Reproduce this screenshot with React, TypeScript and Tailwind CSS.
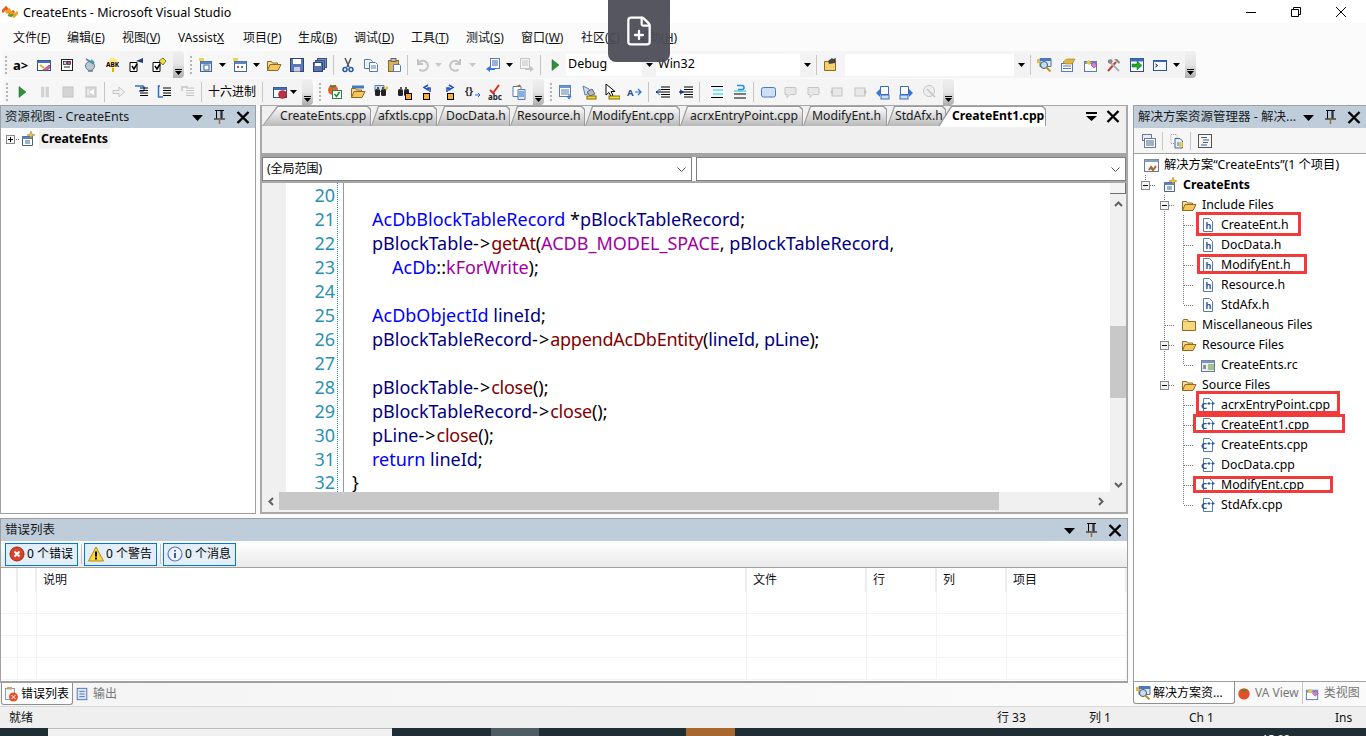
import type { ReactNode } from "react"
import { FilePlus } from "lucide-react"

const S = ({ children, s = 16 }: { children: ReactNode; s?: number }) => (
  <svg width={s} height={s} viewBox="0 0 16 16" className="block shrink-0">
    {children}
  </svg>
)

const winBase = (
  <>
    <rect x="1.5" y="3.5" width="13" height="10" fill="#fff" stroke="#34506f" />
    <rect x="1.5" y="3.5" width="13" height="2.5" fill="#3f6fc0" />
  </>
)
const docBase = <path d="M3.5 1.5h6l3 3v10h-9z" fill="#fff" stroke="#5a7ca8" />
const folderOpen = (
  <>
    <path d="M1.5 13.5v-9h4l1 1.500h5v2" fill="#f7df9a" stroke="#8a6a24" />
    <path d="M1.500 13.500l2.500-6h11l-3 6z" fill="#f6c55b" stroke="#8a6a24" />
  </>
)
const bino = (
  <>
    <rect x="2" y="5" width="5" height="7" rx="1.500" fill="#222" />
    <rect x="8" y="5" width="5" height="7" rx="1.500" fill="#222" />
    <rect x="4" y="3" width="2" height="3" fill="#555" />
    <rect x="9" y="3" width="2" height="3" fill="#555" />
  </>
)
const lines = (c = "#000") => (
  <path d="M6 4h8M6 6.500h8M6 9h8M6 11.500h8" stroke={c} strokeWidth="1" />
)
const gray = "#c4c4c4"
const bubble = (
  <path d="M2 3.500h10a1 1 0 0 1 1 1v5a1 1 0 0 1-1 1H7l-3 3v-3H2z" fill="#e6e6e6" stroke={gray} />
)

const ICONS: Record<string, ReactNode> = {
  ax: <text x="0" y="13" fontSize="13" fontWeight="700" fill="#000">a&gt;</text>,
  edit: <>{winBase}<path d="M7 13l6-5 2 2-5 4z" fill="#e05ab0" stroke="#333" strokeWidth=".5" /><path d="M4 8l4 3" stroke="#e0b020" strokeWidth="2" /></>,
  win2: <><rect x="2.500" y="2.500" width="11" height="11" fill="#fff" stroke="#222" /><rect x="4.500" y="4.500" width="3" height="3" fill="#d0d0d0" stroke="#222" strokeWidth=".7" /><rect x="8.500" y="4.500" width="3" height="3" fill="#e040a0" stroke="#222" strokeWidth=".7" /><path d="M5 10h6" stroke="#222" /></>,
  globe: <><circle cx="8" cy="9" r="4.500" fill="#b9c8d2" stroke="#66808f" /><path d="M4 2l8 5M6 14h5" stroke="#66808f" strokeWidth="1.500" /><path d="M9 3l3 3" stroke="#3aa0c0" strokeWidth="2" /></>,
  abk: <><circle cx="8" cy="6" r="5" fill="#ffe680" /><text x="1" y="10" fontSize="6.500" fontWeight="700" fill="#000">ABK</text><path d="M8 11v4" stroke="#e0b000" strokeWidth="2" /></>,
  tag1: <><path d="M2 5.500h7v9H2z" fill="#fff" stroke="#000" /><path d="M4 9l2 3 3-5" stroke="#000" fill="none" strokeWidth="1.500" /><path d="M8 4l7-3v5z" fill="#223c80" /></>,
  tag2: <><path d="M2 5.500h7v9H2z" fill="#fff" stroke="#000" /><path d="M4 9l2 3 3-5" stroke="#000" fill="none" strokeWidth="1.500" /><path d="M8 4l4-3 3 3-3 4z" fill="#f2e030" stroke="#000" strokeWidth=".5" /></>,
  newp: <><rect x="2.500" y="4.500" width="11" height="10" fill="#d9e5f4" stroke="#45648c" /><rect x="2.500" y="4.500" width="11" height="2.500" fill="#5c86c0" /><rect x="6" y="8" width="5" height="5" fill="#fff" stroke="#45648c" /><path d="M1 1h5v3H1z" fill="#f2d25a" /></>,
  addp: <><rect x="2.500" y="4.500" width="12" height="10" fill="#fff" stroke="#45648c" /><rect x="2.500" y="4.500" width="12" height="2.500" fill="#5c86c0" /><rect x="5" y="9" width="2" height="2" fill="#e04040" /><rect x="9" y="9" width="2" height="2" fill="#40a040" /><path d="M1 1h5v3H1z" fill="#f2d25a" /></>,
  open: folderOpen,
  save: <><rect x="1.500" y="1.500" width="13" height="13" fill="#5a78b8" stroke="#2c4478" /><rect x="4" y="2" width="8" height="5" fill="#fff" /><rect x="5" y="10" width="6" height="4.500" fill="#c8d0dc" /></>,
  saveall: <><rect x="5.500" y="1.500" width="9" height="9" fill="#7a90c4" stroke="#3b4f84" /><rect x="3.500" y="3.500" width="9" height="9" fill="#6a82bc" stroke="#3b4f84" /><rect x="1.500" y="5.500" width="9" height="9" fill="#5a74b0" stroke="#2c4478" /><rect x="3" y="6" width="6" height="3" fill="#fff" /></>,
  cut: <><path d="M5 1l4 9M11 1L7 10" stroke="#555" strokeWidth="1.500" /><circle cx="5" cy="12.500" r="2" fill="none" stroke="#2458b0" strokeWidth="1.500" /><circle cx="11" cy="12.500" r="2" fill="none" stroke="#2458b0" strokeWidth="1.500" /></>,
  copy: <><path d="M1.500 2.500h6l2 2v7h-8z" fill="#eaf1fa" stroke="#5a7ca8" /><path d="M6.500 5.500h6l2 2v7h-8z" fill="#fff" stroke="#5a7ca8" /><path d="M8 9h5M8 11h5" stroke="#5a7ca8" /></>,
  paste: <><rect x="2.500" y="3.500" width="10" height="11" fill="#d8b35a" stroke="#86682a" /><rect x="5" y="1.500" width="5" height="3" fill="#c0c0c0" stroke="#666" /><path d="M7.500 7.500h6l1 1v6h-7z" fill="#fff" stroke="#5a7ca8" /></>,
  undo: <path d="M4 2v5h5M4.500 6.500a5 5 0 1 1 1 6" fill="none" stroke={gray} strokeWidth="2" />,
  redo: <path d="M12 2v5H7M11.500 6.500a5 5 0 1 0-1 6" fill="none" stroke={gray} strokeWidth="2" />,
  nav: <><rect x="5.500" y="1.500" width="9" height="10" fill="#fff" stroke="#5a7ca8" /><path d="M7 4h6M7 6h6M7 8h6" stroke="#3a5fc0" /><path d="M1 12l4-3v2h5v2H5v2z" fill="#3a78d8" /></>,
  navg: <><rect x="1.500" y="1.500" width="9" height="10" fill="#f4f4f4" stroke={gray} /><path d="M3 4h6M3 6h6M3 8h6" stroke={gray} /><path d="M15 12l-4-3v2H6v2h5v2z" fill={gray} /></>,
  play: <path d="M5 2.500l7 5.500-7 5.500z" fill="#2f8f3f" stroke="#1f6f2f" strokeWidth=".5" />,
  pause: <path d="M4.500 3h2.500v10H4.500zM9 3h2.500v10H9z" fill="#d4d4d4" stroke={gray} strokeWidth=".5" />,
  stop: <rect x="3" y="3" width="10" height="10" fill="#d4d4d4" stroke={gray} />,
  back: <><rect x="3" y="3" width="10" height="10" fill="#d8d8d8" stroke={gray} /><path d="M11 5v6L6 8z" fill="#fff" /><path d="M5 5v6" stroke="#fff" /></>,
  step: <path d="M2 6.500h6V3l5.500 5L8 13V9.500H2z" fill="#f0f0f0" stroke={gray} />,
  stepin: <><path d="M1 2h8a3 3 0 0 1 0 5H5" fill="none" stroke="#2f6fd0" strokeWidth="1.500" />{lines()}</>,
  stepov: <><path d="M3 2H1.500v11H6" fill="none" stroke="#2f6fd0" strokeWidth="1.500" />{lines()}</>,
  stepout: <><path d="M2 7V3h6" fill="none" stroke={gray} strokeWidth="1.500" />{lines(gray)}</>,
  breakp: <>{winBase}<circle cx="10.500" cy="10.500" r="4" fill="#c03040" stroke="#80202a" strokeWidth=".5" /></>,
  tomato: <><circle cx="6" cy="6" r="5" fill="#e06030" /><path d="M3 1.500l3 1.500 3-1.500" stroke="#3a8a30" strokeWidth="1.500" fill="none" /><rect x="5.500" y="6.500" width="9" height="8" fill="#fff" stroke="#2f7f3f" /><path d="M7.500 10l2 2.500 3-4.500" stroke="#1a8a3a" strokeWidth="1.500" fill="none" /></>,
  openfile: <><rect x="2" y="1.500" width="12" height="3" fill="#4a78c0" />{folderOpen}</>,
  findp: <><path d="M2 1.500h9v6H2z" fill="#cfe0f4" stroke="#5a7ca8" /><path d="M9 7l5-5 1.500 2-4 5z" fill="#e8c040" />{bino}</>,
  bino: <>{bino}<rect x="9.500" y="9.500" width="6" height="6" fill="#f5a030" stroke="#000" /></>,
  ret1: <><path d="M9 1l-4 2.500 4 2.500V4h2v4" fill="none" stroke="#1848c8" strokeWidth="1.500" /><rect x="4.500" y="9.500" width="6" height="6" fill="#f8b040" stroke="#000" /></>,
  ret2: <><path d="M7 1l4 2.500-4 2.500V4H5v4" fill="none" stroke="#1848c8" strokeWidth="1.500" /><rect x="5.500" y="9.500" width="6" height="6" fill="#f8b040" stroke="#000" /></>,
  brace: <><text x="0" y="11" fontSize="10" fontWeight="700" fill="#222">{"{}"}</text><path d="M10 11h5M13 9l2 2-2 2" stroke="#2f6fd0" fill="none" /></>,
  abc: <><path d="M2 6l3 3 6-8" stroke="#d83020" strokeWidth="2" fill="none" /><text x="0" y="15.500" fontSize="8" fontWeight="700" fill="#222">abc</text></>,
  rename: <><path d="M2 2.500h8v10H2z" fill="#fff" stroke="#5a7ca8" /><path d="M7 5.500h7v10H7z" fill="#dce8f6" stroke="#5a7ca8" /><path d="M8 8h5M8 10h5M8 12h5" stroke="#2f6fd0" /><path d="M5 2l4-1.500 1 2z" fill="#e05a20" /></>,
  tbl: <><rect x="1.500" y="1.500" width="11" height="11" fill="#fff" stroke="#5a7ca8" /><rect x="1.500" y="1.500" width="11" height="2.500" fill="#6a94cc" /><path d="M3 6h8M3 8h8M3 10h8" stroke="#5a7ca8" /><path d="M11 10v4M9 12l2 3 2-3" stroke="#2f6fd0" fill="none" /></>,
  flag: <><path d="M2 2l6 3 1 4-5 2z" fill="#cfe0f4" stroke="#5a7ca8" /><path d="M6 8l5-3 3 5-5 2z" fill="#b0b8c0" stroke="#667" /><rect x="6" y="12" width="9" height="3" fill="#f0d830" stroke="#806a00" /></>,
  cursor: <><path d="M2 0v11l3-2.500 2 4 2-1-2-4h4z" fill="#fff" stroke="#000" /><rect x="5" y="12" width="11" height="3" fill="#f0e030" stroke="#806a00" /></>,
  ax2: <><text x="0" y="12" fontSize="9.500" fontWeight="700" fill="#2a4f90">A</text><path d="M8 8h6M11 5l3 3-3 3" stroke="#2f6fd0" fill="none" strokeWidth="1.200" /></>,
  outl: <><path d="M1 8l4-3v2h0M1 8l4 3" stroke="#2f6fd0" fill="none" /><path d="M6 3h9M6 5.500h9M1 8h14M6 10.500h9M6 13h9" stroke="#000" /></>,
  indr: <><path d="M6 8L2 5v6z" fill="#2f6fd0" /><path d="M6 3h9M6 5.500h9M1 8h14M6 10.500h9M6 13h9" stroke="#000" /></>,
  cmt: <><path d="M2 2.500h12M2 13.500h12" stroke="#000" strokeWidth="1.200" /><path d="M4 6h10M4 10h10" stroke="#18d0e0" strokeWidth="1.200" /></>,
  cmt2: <><path d="M2 10h12M2 14h12" stroke="#000" strokeWidth="1.200" /><path d="M2 7h12" stroke="#18d0e0" strokeWidth="1.200" /><path d="M5 1.500h5a2 2 0 0 1 0 4H6" fill="none" stroke="#1f8fe0" strokeWidth="1.500" /></>,
  box: <rect x="1.500" y="3.500" width="14" height="9.500" rx="2" fill="#cfe0f6" stroke="#4a78c0" />,
  b1: bubble,
  b2: bubble,
  b3: <><rect x="3" y="4" width="10" height="8" fill="#e8e8e8" stroke={gray} /><path d="M1 8l3-3v6z" fill={gray} /></>,
  b4: <><rect x="3" y="4" width="10" height="8" fill="#e8e8e8" stroke={gray} /><path d="M15 8l-3-3v6z" fill={gray} /></>,
  navl: <><path d="M5.500 2.500h8v8h-8z" fill="#fff" stroke="#3a6ac0" /><path d="M1 9l4-4v8z" fill="#2f78e0" /><rect x="6" y="11" width="8" height="4" fill="#cfe0f6" stroke="#3a6ac0" /></>,
  navr: <><path d="M2.500 2.500h8v8h-8z" fill="#fff" stroke="#3a6ac0" /><path d="M15 9l-4-4v8z" fill="#2f78e0" /><rect x="2" y="11" width="8" height="4" fill="#cfe0f6" stroke="#3a6ac0" /></>,
  b5: <><circle cx="8" cy="7" r="5.500" fill="#eee" stroke={gray} /><path d="M6 5l5 5M11 10l3 3" stroke={gray} strokeWidth="1.500" /></>,
  fold: <><path d="M1.500 13.500v-9h5l1-1h5v10z" fill="#f4d16c" stroke="#8a6a24" /><path d="M5 4l4-3 1 1 3-1-1 5-6 1z" fill="#444" /></>,
  findwin: <><path d="M3 1.500h11v8H3z" fill="#dbe7f6" stroke="#4f74a8" /><rect x="3" y="1.500" width="11" height="2.500" fill="#4a78c0" /><circle cx="7" cy="8" r="3.500" fill="#bfe0f8" stroke="#555" /><path d="M9.500 10.500l4 4" stroke="#c09020" strokeWidth="2" /><path d="M0 2h3v4H0z" fill="#e8b840" /></>,
  props: <><rect x="1.500" y="6.500" width="11" height="8" fill="#fff" stroke="#5a7ca8" /><path d="M3 9h8M3 11.500h8" stroke="#5a7ca8" /><path d="M3 5l4-3h8l-3 5H5z" fill="#e0b840" stroke="#806010" strokeWidth=".5" /></>,
  clsv: <><rect x="1.500" y="4.500" width="12" height="10" fill="#fff" stroke="#5a7ca8" /><path d="M1.500 5h12v2h-12z" fill="#6a94cc" /><path d="M8 8l3-3 3 3-3 3z" fill="#e07ad0" stroke="#803070" strokeWidth=".5" /><path d="M3 6l2-3 3 2-2 3z" fill="#f2c83a" /></>,
  tools: <><path d="M2 14L10 5" stroke="#c04030" strokeWidth="2" /><path d="M8 2l5 5 1-2-3-3z" fill="#888" /><path d="M13 14L5 6" stroke="#b0b0b0" strokeWidth="2" /><path d="M2 3l3-1 2 2-2 3-3-1z" fill="#888" /></>,
  green: <><rect x="1.500" y="1.500" width="13" height="13" fill="#fff" stroke="#2f4f8a" /><rect x="1.500" y="1.500" width="13" height="3" fill="#3a6ac0" /><path d="M3 7h5V4l5 4.500L8 13v-3H3z" fill="#22a82c" stroke="#0f6a18" strokeWidth=".5" /></>,
  term: <><rect x="1.500" y="3.500" width="13" height="10" fill="#f4f8ff" stroke="#2f4f8a" /><rect x="1.500" y="3.500" width="13" height="1.500" fill="#3a6ac0" /><path d="M3.500 7l2 1.500-2 1.500" stroke="#000" fill="none" /></>,
  sln: <><rect x="1.500" y="2.500" width="14" height="12" fill="#f6f8fb" stroke="#6a7a90" /><rect x="1.500" y="2.500" width="14" height="2.500" fill="#8aa0b8" /><path d="M6 13l2-3 2 3 3-4" stroke="#e04a20" strokeWidth="2" fill="none" /><path d="M8 10l2 3" stroke="#3aa030" strokeWidth="2" /></>,
  proj: <><path d="M2.500 5.500h10v9h-10z" fill="#fff" stroke="#45648c" /><rect x="2.500" y="5.500" width="10" height="2.500" fill="#5c86c0" /><path d="M5 10h5M5 12h5" stroke="#45648c" /><path d="M11 0l1 3 3 1-3 1-1 3-1-3-3-1 3-1z" fill="#f2c83a" stroke="#806010" strokeWidth=".4" /></>,
  fclosed: <><path d="M1.500 4.500v9h13v-9z" fill="#f6d779" stroke="#8a6a24" /><path d="M1.500 4.500l1-2h4l1 2" fill="#f9e6a6" stroke="#8a6a24" /></>,
  h: <>{docBase}<text x="5.500" y="12" fontSize="9" fontWeight="700" fill="#1c56a8">h</text></>,
  cpp: <>{docBase}<text x="1" y="11.500" fontSize="9.500" fontWeight="700" fill="#1c56a8">C</text><path d="M7.500 6.500h3M9 5v3M11.500 6.500h3M13 5v3" stroke="#1c56a8" /></>,
  rc: <><rect x="1.500" y="3.500" width="13" height="11" fill="#e8edf4" stroke="#6a7a90" /><rect x="1.500" y="3.500" width="13" height="2.500" fill="#7a96bc" /><rect x="8" y="7" width="6" height="6" fill="#9fc48a" /><path d="M3 9h3M3 11h3" stroke="#333" /></>,
  err: <><circle cx="8" cy="8" r="7" fill="#d9432a" stroke="#a02a18" /><path d="M5.500 5.500l5 5M10.500 5.500l-5 5" stroke="#fff" strokeWidth="2" /></>,
  warn: <><path d="M8 1l7.500 14H.500z" fill="#f9d93c" stroke="#b08a10" /><path d="M8 5.500v5M8 11.500v2" stroke="#000" strokeWidth="2" /></>,
  info: <><circle cx="8" cy="8" r="7" fill="#eef3fb" stroke="#5a7cc0" strokeWidth="1.200" /><path d="M8 4v1.500M8 7v5" stroke="#2f5fb0" strokeWidth="2" /></>,
  errtab: <><rect x="2.500" y="2.500" width="9" height="11" fill="#f4f6fa" stroke="#8a9ab0" /><rect x="4" y="1" width="5" height="2.500" fill="#c8a860" /><circle cx="10.500" cy="11" r="4.500" fill="#e8502c" /><path d="M8.500 9l4 4M12.500 9l-4 4" stroke="#fff" /></>,
  out: <><rect x="2.500" y="1.500" width="11" height="13" fill="#dbe6f6" stroke="#4a6ab0" /><path d="M5 5h6M5 8h6M5 11h6" stroke="#4a6ab0" /></>,
  tomatoTab: <><circle cx="8" cy="9" r="6.500" fill="#e0502a" /><path d="M4 3l4 1.500L12 3l-2 3H6z" fill="#3f8f30" /></>,
  vslogo: <><path d="M0 8l4-4 5 6 3-3" stroke="#e85a20" strokeWidth="3" fill="none" /><path d="M16 8l-4 4-5-6-3 3" stroke="#f0a020" strokeWidth="3" fill="none" /><path d="M6 11l3 1 2-2" stroke="#58a030" strokeWidth="2" fill="none" /></>,
  tb1: <><rect x="1.500" y="1.500" width="9" height="6" fill="#e8edf4" stroke="#6a7a90" /><rect x="3.500" y="5.500" width="11" height="9" fill="#fff" stroke="#6a7a90" /><path d="M5 8h8M5 10h8M5 12h8" stroke="#45648c" /></>,
  tb2: <><path d="M2 1.500h6v9H2z" fill="#fff" stroke="#999" strokeDasharray="1 1" /><path d="M6 5.500h5l2.500 2.500v7H6z" fill="#e8f0fa" stroke="#45648c" /><path d="M8 10h4M8 12h4" stroke="#2f6fd0" /><rect x="10" y="9" width="4" height="5" fill="#f2c83a" opacity=".8" /></>,
  tb3: <><rect x="1.500" y="1.500" width="13" height="13" fill="#fbf6e6" stroke="#555" /><path d="M4 4.500h6M6 7h6M6 9.500h5M4 12h6" stroke="#2f5fc0" /></>,
}

const Ico = ({ n, s }: { n: string; s?: number }) => <S s={s}>{ICONS[n]}</S>

const Tri = ({ c = "#000" }: { c?: string }) => (
  <svg width="7" height="4" viewBox="0 0 7 4" className="block">
    <path d="M0 0h7L3.500 4z" fill={c} />
  </svg>
)

const Chev = ({ w }: { w: string }) => (
  <div className={`${w} h-full shrink-0 rounded-r-[4px] bg-gradient-to-b from-[#f0f0f0] via-[#e4e4e4] to-[#aeaeae] flex flex-col items-center justify-end pb-[3px]`}>
    <div className="w-[7px] h-px bg-black mb-px" />
    <Tri />
  </div>
)

const Combo = ({ w, label }: { w: string; label?: string }) => (
  <div className={`${w} h-[22px] shrink-0 bg-white flex items-center pl-[2px] text-[12.5px] text-black`}>
    <span className="flex-1">{label}</span>
    <div className="w-[14px] h-full bg-[#f2f2f2] flex items-center justify-center">
      <Tri />
    </div>
  </div>
)

function Item({ t }: { t: string }) {
  if (t === "|") return <div className="w-[5px] flex justify-center shrink-0"><div className="w-px h-[20px] bg-[#c6c6c6]" /></div>
  if (t === "v") return <div className="w-[11px] flex justify-center shrink-0"><Tri /></div>
  if (t === "vg") return <div className="w-[11px] flex justify-center shrink-0"><Tri c="#c8c8c8" /></div>
  if (t === ".") return <div className="w-[3px] shrink-0" />
  if (t === "-") return <div className="w-0 -ml-[3px] shrink-0" />
  if (t === "hex") return <div className="w-[56px] shrink-0 text-center text-[12px] text-black">十六进制</div>
  if (t === "debug") return <Combo w="w-[90px]" label="Debug" />
  if (t === "win32") return <Combo w="w-[158px]" label="Win32" />
  if (t === "cfg") return <Combo w="w-[183px]" />
  return <div className="w-[23px] h-full flex items-center justify-center shrink-0"><Ico n={t} /></div>
}

const Strip = ({ items, ml, grip }: { items: string; ml: string; grip: string }) => (
  <div className={`${ml} h-full flex items-center rounded-[3px] bg-gradient-to-r from-[#f7f7f7] to-[#f3f3f3]`}>
    <div className={`${grip} shrink-0 flex justify-center`}>
      <div className="h-[18px] border-l-2 border-dotted border-[#b4b4b4]" />
    </div>
    {items.split(" ").map((t, i) => <Item key={i} t={t} />)}
    <Chev w="w-[11px]" />
  </div>
)

const Pin = () => (
  <svg width="11" height="15" viewBox="0 0 11 15" className="block">
    <path d="M1 .5h9M2.500 1v7.500M8 1v7.500M0 9h11" stroke="#000" fill="none" />
    <path d="M5.500 9v5" stroke="#a06a20" strokeWidth="1.500" />
    <path d="M7 1v7" stroke="#000" />
  </svg>
)

const BigX = () => (
  <svg width="14" height="13" viewBox="0 0 14 13" className="block">
    <path d="M1.500 1l11 11M12.500 1l-11 11" stroke="#000" strokeWidth="2.400" />
  </svg>
)

const HeaderButtons = () => (
  <div className="flex items-center gap-[11px] shrink-0">
    <svg width="11" height="6" viewBox="0 0 11 6" className="block mt-[2px]"><path d="M0 0h11L5.500 6z" fill="#000" /></svg>
    <Pin />
    <BigX />
  </div>
)

const PanelHeader = ({ title }: { title: string }) => (
  <div className="h-[22px] shrink-0 bg-[#bfcddb] flex items-center pl-[4px] pr-[5px] text-[12.500px] text-[#1a1a1a]">
    <span className="flex-1 truncate">{title}</span>
    <HeaderButtons />
  </div>
)

const menu: [string, string, string][] = [
  ["文件", "F", "w-[54px]"],
  ["编辑", "E", "w-[55px]"],
  ["视图", "V", "w-[56px]"],
  ["", "", "w-[65px]"],
  ["项目", "P", "w-[55px]"],
  ["生成", "B", "w-[56px]"],
  ["调试", "D", "w-[57px]"],
  ["工具", "T", "w-[55px]"],
  ["测试", "S", "w-[55px]"],
  ["窗口", "W", "w-[60px]"],
  ["社区", "C", "w-[56px]"],
  ["帮助", "H", "w-[50px]"],
]

const tabs = [
  { t: "CreateEnts.cpp", c: "w-[109px] pl-[18px]", first: true },
  { t: "afxtls.cpp", c: "w-[66px] pl-[7px]" },
  { t: "DocData.h", c: "w-[73px] pl-[9px]" },
  { t: "Resource.h", c: "w-[75px] pl-[7px]" },
  { t: "ModifyEnt.cpp", c: "w-[95px] pl-[7px]" },
  { t: "acrxEntryPoint.cpp", c: "w-[123px] pl-[10px]" },
  { t: "ModifyEnt.h", c: "w-[84px] pl-[9px]" },
  { t: "StdAfx.h", c: "w-[59px] pl-[8px]" },
]

const B = ({ children }: { children: ReactNode }) => <span className="text-[#0000ff]">{children}</span>
const N = ({ children }: { children: ReactNode }) => <span className="text-[#000080]">{children}</span>
const R = ({ children }: { children: ReactNode }) => <span className="text-[#800000] tracking-[-0.25px]">{children}</span>
const P = ({ children }: { children: ReactNode }) => <span className="text-[#a000a0]">{children}</span>
const Arrow = () => <span className="tracking-[1px]">-&gt;</span>

const code: ReactNode[] = [
  null,
  <><B>AcDbBlockTableRecord</B> *<N>pBlockTableRecord</N>;</>,
  <><N>pBlockTable</N><Arrow /><R>getAt</R>(<P>ACDB_MODEL_SPACE</P>, <N>pBlockTableRecord</N>,</>,
  <><span className="pl-[20px]"><B>AcDb</B>::<P>kForWrite</P>);</span></>,
  null,
  <><B>AcDbObjectId</B> <N>lineId</N>;</>,
  <><N>pBlockTableRecord</N><Arrow /><R>appendAcDbEntity</R><span className="tracking-[-0.2px]">(<N>lineId</N>, <N>pLine</N>);</span></>,
  null,
  <><N>pBlockTable</N><Arrow /><R>close</R>();</>,
  <><N>pBlockTableRecord</N><Arrow /><R>close</R>();</>,
  <><N>pLine</N><Arrow /><R>close</R>();</>,
  <><B>return</B> <N>lineId</N>;</>,
  <span className="-ml-[20px]">{"}"}</span>,
]

const TreeCell = ({ k, last }: { k: string; last: boolean }) => (
  <svg width={last ? 27 : 19} height="20" viewBox={`0 0 ${last ? 27 : 19} 20`} className="block shrink-0">
    {(k === "v" || k === "t" || k === "x") && <path d="M10.500 0v20" stroke="#777" strokeDasharray="1 1" />}
    {(k === "l" || k === "y" || k === "e") && <path d="M10.500 0v10" stroke="#777" strokeDasharray="1 1" />}
    {k !== "v" && <path d="M11 10.500h10" stroke="#777" strokeDasharray="1 1" />}
    {(k === "x" || k === "y" || k === "e") && (
      <>
        <rect x="6.500" y="6.500" width="8" height="8" fill="#f4f4f4" stroke="#8a8a8a" />
        <path d="M8 10.500h5" stroke="#000" />
      </>
    )}
  </svg>
)

const tree: { cells: string; icon: string; t: string; bold?: boolean }[] = [
  { cells: "e", icon: "proj", t: "CreateEnts", bold: true },
  { cells: "_ x", icon: "open", t: "Include Files" },
  { cells: "_ v t", icon: "h", t: "CreateEnt.h" },
  { cells: "_ v t", icon: "h", t: "DocData.h" },
  { cells: "_ v t", icon: "h", t: "ModifyEnt.h" },
  { cells: "_ v t", icon: "h", t: "Resource.h" },
  { cells: "_ v l", icon: "h", t: "StdAfx.h" },
  { cells: "_ t", icon: "fclosed", t: "Miscellaneous Files" },
  { cells: "_ x", icon: "open", t: "Resource Files" },
  { cells: "_ v l", icon: "rc", t: "CreateEnts.rc" },
  { cells: "_ y", icon: "open", t: "Source Files" },
  { cells: "_ _ t", icon: "cpp", t: "acrxEntryPoint.cpp" },
  { cells: "_ _ t", icon: "cpp", t: "CreateEnt1.cpp" },
  { cells: "_ _ t", icon: "cpp", t: "CreateEnts.cpp" },
  { cells: "_ _ t", icon: "cpp", t: "DocData.cpp" },
  { cells: "_ _ t", icon: "cpp", t: "ModifyEnt.cpp" },
  { cells: "_ _ l", icon: "cpp", t: "StdAfx.cpp" },
]

const marks = [
  "left-[62px] top-[58px] w-[105px] h-[24px]",
  "left-[63px] top-[100px] w-[110px] h-[20px]",
  "left-[62px] top-[237px] w-[144px] h-[23px]",
  "left-[59px] top-[260px] w-[152px] h-[19px]",
  "left-[59px] top-[322px] w-[140px] h-[17px]",
]

const Count = ({ n, t }: { n: string; t: string }) => (
  <div className="w-[73px] h-[23px] shrink-0 flex items-center gap-[2px] pl-[3px] border border-[#0078d7] bg-[#e3eef8] text-[12px] text-black">
    <Ico n={n} />
    <span>{t}</span>
  </div>
)

const Sep6 = () => (
  <div className="w-[6px] flex justify-center shrink-0"><div className="w-px h-[20px] bg-[#c6c6c6]" /></div>
)

const columns = [
  { w: "w-[17px]", t: "" },
  { w: "w-[19px]", t: "" },
  { w: "w-[710px]", t: "说明" },
  { w: "w-[120px]", t: "文件" },
  { w: "w-[70px]", t: "行" },
  { w: "w-[70px]", t: "列" },
  { w: "flex-1", t: "项目" },
]

export default function App() {
  return (
    <div className="relative w-[1366px] h-[736px] overflow-hidden flex flex-col bg-[#fbfbfb] text-[12.500px] text-black [font-family:'Noto_Sans','Noto_Sans_CJK_SC',sans-serif]">
      {/* Title bar */}
      <div className="h-[23px] shrink-0 bg-white flex items-center pl-[2px] text-[12.500px]">
        <Ico n="vslogo" />
        <span className="ml-[5px] pt-[3px]">CreateEnts - Microsoft Visual Studio</span>
        <div className="ml-auto flex items-center gap-[35px] pr-[20px]">
          <svg width="10" height="10" viewBox="0 0 10 10" className="block"><path d="M0 5.500h10" stroke="#000" /></svg>
          <svg width="10" height="10" viewBox="0 0 10 10" className="block"><path d="M.5 2.500h7v7h-7zM2.500 2.500v-2h7v7h-2" fill="none" stroke="#000" /></svg>
          <svg width="10" height="10" viewBox="0 0 10 10" className="block"><path d="M0 0l10 10M10 0L0 10" stroke="#000" /></svg>
        </div>
      </div>

      {/* Menu */}
      <div className="h-[27px] shrink-0 flex items-center pl-[13px] pt-[2px] text-[12px] text-[#111]">
        {menu.map(([l, a, w]) =>
          l ? (
            <div key={l} className={`${w} shrink-0 whitespace-nowrap`}>{l}(<u>{a}</u>)</div>
          ) : (
            <div key="va" className={`${w} shrink-0`}>VAssist<u>X</u></div>
          ),
        )}
      </div>

      {/* Toolbars */}
      <div className="h-[28px] shrink-0 flex pt-px">
        <Strip ml="ml-[3px]" grip="w-[6px]" items="ax edit win2 globe abk tag1 tag2 ." />
        <Strip ml="ml-[3px]" grip="w-[7px]" items="newp v addp v open save saveall | cut copy paste | undo vg redo vg . nav v navg | play debug win32 | fold . cfg | findwin props clsv tools green term v ." />
      </div>
      <div className="h-[27px] shrink-0 flex pt-px">
        <Strip ml="ml-[3px]" grip="w-[7px]" items="play pause stop back | step stepin stepov stepout | hex | . breakp - v ." />
        <Strip ml="ml-[3px]" grip="w-[7px]" items="tomato openfile findp bino ret1 ret2 brace abc rename ." />
        <Strip ml="ml-[4px]" grip="w-[6px]" items="tbl flag cursor ax2 | outl indr | . cmt cmt2 | box b1 b2 b3 b4 navl navr b5 ." />
      </div>

      {/* Body */}
      <div className="flex-1 min-h-0 flex">
        <div className="w-[1128px] shrink-0 flex flex-col">
          <div className="h-[409px] shrink-0 flex">
            {/* Resource view */}
            <div className="w-[256px] shrink-0 border border-[#a0a0a0] bg-white flex flex-col">
              <PanelHeader title="资源视图 - CreateEnts" />
              <div className="flex items-center pl-[3px] h-[20px] mt-[1px]">
                <svg width="16" height="20" viewBox="0 0 16 20" className="block shrink-0">
                  <path d="M10 10.500h6" stroke="#777" strokeDasharray="1 1" />
                  <rect x="2.500" y="6.500" width="8" height="8" fill="#f4f4f4" stroke="#8a8a8a" />
                  <path d="M4 10.500h5M6.500 8v5" stroke="#000" />
                </svg>
                <Ico n="proj" />
                <span className="ml-[3px] px-[2px] h-[20px] leading-[20px] bg-[#f0f0f0] font-bold text-[12.300px]">CreateEnts</span>
              </div>
            </div>

            {/* Editor */}
            <div className="ml-[4px] flex-1 min-w-0 border-2 border-[#a8a8a8] border-t bg-[#f0f0f0] flex flex-col">
              <div className="h-[20px] shrink-0 flex text-[12.200px] text-[#1a1a1a]">
                {tabs.map((tab) => (
                  <div key={tab.t} className={`relative ${tab.c} shrink-0 leading-[20px] whitespace-nowrap`}>
                    <div className={`absolute inset-0 bg-[#9a9a9a] ${tab.first ? "[clip-path:polygon(0_100%,15px_0,calc(100%-3px)_0,100%_3px,100%_100%)]" : "[clip-path:polygon(0_100%,7px_0,calc(100%-3px)_0,100%_3px,100%_100%)]"}`} />
                    <div className={`absolute inset-x-px top-px bottom-0 bg-gradient-to-b from-[#fbfbfb] to-[#bababa] ${tab.first ? "[clip-path:polygon(0_100%,15px_0,calc(100%-3px)_0,100%_3px,100%_100%)]" : "[clip-path:polygon(0_100%,7px_0,calc(100%-3px)_0,100%_3px,100%_100%)]"}`} />
                    <span className="relative">{tab.t}</span>
                  </div>
                ))}
                <div className="relative -ml-[8px] w-[108px] shrink-0 pl-[14px] font-bold leading-[20px] text-black whitespace-nowrap">
                  <div className="absolute inset-0 bg-[#9a9a9a] [clip-path:polygon(0_100%,13px_0,calc(100%-3px)_0,100%_3px,100%_100%)]" />
                  <div className="absolute inset-x-px top-px -bottom-px bg-white [clip-path:polygon(0_100%,13px_0,calc(100%-3px)_0,100%_3px,100%_100%)]" />
                  <span className="relative">CreateEnt1.cpp</span>
                </div>
                <div className="ml-auto flex items-center gap-[9px] pr-[6px]">
                  <div className="flex flex-col items-center">
                    <div className="w-[11px] h-[2px] bg-black mb-[2px]" />
                    <svg width="11" height="5" viewBox="0 0 11 5" className="block"><path d="M0 0h11L5.500 5z" fill="#000" /></svg>
                  </div>
                  <BigX />
                </div>
              </div>
              <div className="h-[27px] shrink-0" />
              <div className="h-[4px] shrink-0 bg-[#a4a4a4]" />
              <div className="h-[24px] shrink-0 flex gap-[4px] bg-white">
                <div className="w-[430px] shrink-0 border border-[#808080] flex items-center justify-between pl-[4px] pr-[5px] text-[12px]">
                  <span>(全局范围)</span>
                  <svg width="9" height="5" viewBox="0 0 9 5" className="block"><path d="M.5.500l4 4 4-4" stroke="#555" fill="none" /></svg>
                </div>
                <div className="flex-1 border border-[#808080] flex items-center justify-end pr-[5px]">
                  <svg width="9" height="5" viewBox="0 0 9 5" className="block"><path d="M.5.500l4 4 4-4" stroke="#555" fill="none" /></svg>
                </div>
              </div>
              <div className="h-[2px] shrink-0 bg-[#a8a8a8]" />

              {/* Code */}
              <div className="h-[309px] shrink-0 flex bg-white">
                <div className="w-[24px] shrink-0 bg-[#f0f0f0]" />
                <div className="w-[52px] shrink-0 border-r border-dotted border-[#2b91af] text-right pr-[2px] text-[18px] leading-[24px] text-[#2b91af]">
                  {code.map((_, i) => (
                    <div key={i} className={i === 12 ? "mt-[2px] leading-[19px]" : ""}>{i + 20}</div>
                  ))}
                </div>
                <div className="ml-[5px] w-px shrink-0 bg-[#9a9a9a]" />
                <div className="flex-1 min-w-0 pl-[28px] text-[18px] leading-[24px] text-black whitespace-nowrap">
                  {code.map((l, i) => (
                    <div key={i} className={i === 12 ? "mt-[2px] h-[19px] leading-[19px]" : "h-[24px]"}>{l}</div>
                  ))}
                </div>
                <div className="w-[16px] shrink-0 bg-[#f0f0f0] flex flex-col items-center">
                  <div className="w-full h-[11px] shrink-0 border-b border-r border-[#707070] bg-[#f4f4f4]" />
                  <svg width="9" height="6" viewBox="0 0 9 6" className="block mt-[7px] shrink-0"><path d="M1 5l3.500-3.500L8 5" stroke="#606060" strokeWidth="2" fill="none" /></svg>
                  <div className="w-full h-[72px] mt-[119px] shrink-0 bg-[#c8c8c8]" />
                  <svg width="9" height="6" viewBox="0 0 9 6" className="block mt-[84px] shrink-0"><path d="M1 1l3.500 3.500L8 1" stroke="#606060" strokeWidth="2" fill="none" /></svg>
                </div>
              </div>
              <div className="h-[18px] shrink-0 flex items-stretch bg-[#f0f0f0]">
                <div className="w-[17px] shrink-0 flex items-center justify-center">
                  <svg width="6" height="9" viewBox="0 0 6 9" className="block"><path d="M5 1L1.500 4.500 5 8" stroke="#606060" strokeWidth="2" fill="none" /></svg>
                </div>
                <div className="w-[720px] shrink-0 bg-[#c8c8c8]" />
                <div className="flex-1 flex items-center justify-end pr-[22px]">
                  <svg width="6" height="9" viewBox="0 0 6 9" className="block"><path d="M1 1l3.500 3.500L1 8" stroke="#606060" strokeWidth="2" fill="none" /></svg>
                </div>
              </div>
            </div>
          </div>

          {/* Error list */}
          <div className="mt-[4px] h-[164px] shrink-0 border border-[#a0a0a0] bg-white flex flex-col">
            <PanelHeader title="错误列表" />
            <div className="h-[27px] shrink-0 flex items-center pl-[4px] bg-gradient-to-b from-white to-[#eaeaea] border-b border-[#a0a0a0]">
              <Count n="err" t="0 个错误" />
              <Sep6 />
              <Count n="warn" t="0 个警告" />
              <Sep6 />
              <Count n="info" t="0 个消息" />
            </div>
            <div className="flex-1 min-h-0 flex flex-col text-[12px] text-[#111]">
              <div className="h-[24px] shrink-0 flex">
                {columns.map((c, i) => (
                  <div key={i} className={`${c.w} shrink-0 border-r-2 border-[#ececec] pl-[6px] leading-[24px]`}>{c.t}</div>
                ))}
              </div>
              {[0, 1, 2, 3].map((r) => (
                <div key={r} className="h-[22px] shrink-0 flex border-b border-[#f2f3f9]">
                  {columns.map((c, i) => <div key={i} className={`${c.w} shrink-0 border-r border-[#f2f3f9]`} />)}
                </div>
              ))}
            </div>
          </div>

          <div className="h-[24px] shrink-0 border-t border-[#a0a0a0] flex bg-gradient-to-r from-[#f4f4f4] to-[#fafafa] text-[12px]">
            <div className="w-[72px] ml-px h-[22px] shrink-0 bg-white border-x border-b border-[#909090] rounded-b-[3px] flex items-center gap-[2px] pl-[1px]">
              <Ico n="errtab" />
              <span>错误列表</span>
            </div>
            <div className="flex items-center h-[22px] pl-[2px] gap-[4px] text-[#777]">
              <Ico n="out" s={14} />
              <span>输出</span>
            </div>
          </div>
        </div>

        {/* Solution explorer */}
        <div className="ml-[5px] flex-1 min-w-0 flex flex-col">
          <div className="h-[577px] shrink-0 border border-[#a0a0a0] border-r-0 bg-white flex flex-col">
            <PanelHeader title="解决方案资源管理器 - 解决..." />
            <div className="h-[26px] shrink-0 flex items-center pl-[3px] border-b border-[#a0a0a0] bg-[#f6f6f6]">
              <div className="w-[23px] flex justify-center"><Ico n="tb1" /></div>
              <div className="w-px h-[18px] bg-[#c6c6c6] mx-[2px]" />
              <div className="w-[23px] flex justify-center"><Ico n="tb2" /></div>
              <div className="w-px h-[18px] bg-[#c6c6c6] mx-[2px]" />
              <div className="w-[23px] flex justify-center"><Ico n="tb3" /></div>
            </div>
            <div className="relative flex-1 min-h-0 pt-px text-[12.300px] whitespace-nowrap">
              <div className="h-[20px] flex items-center pl-[9px] gap-[5px]">
                <Ico n="sln" />
                <span>解决方案“CreateEnts”(1 个项目)</span>
              </div>
              {tree.map((r) => {
                const cells = r.cells.split(" ")
                return (
                  <div key={r.t} className="h-[20px] flex items-center pl-[1px]">
                    {cells.map((k, i) =>
                      k === "_" ? <div key={i} className="w-[19px] shrink-0" /> : <TreeCell key={i} k={k} last={i === cells.length - 1} />,
                    )}
                    <Ico n={r.icon} />
                    <span className={`ml-[5px] ${r.bold ? "font-bold" : ""}`}>{r.t}</span>
                  </div>
                )
              })}
              {marks.map((m) => <div key={m} className={`absolute ${m} border-[3px] border-[#f23a3a]`} />)}
            </div>
          </div>
          <div className="h-[24px] shrink-0 flex items-start bg-gradient-to-r from-[#f6f6f6] to-[#fafafa] text-[12px]">
            <div className="w-[102px] h-[22px] shrink-0 bg-white border-x border-b border-[#909090] rounded-b-[3px] flex items-center pl-[2px] whitespace-nowrap">
              <Ico n="findwin" />
              <span className="ml-px">解决方案资...</span>
            </div>
            <div className="h-[22px] flex items-center pl-[2px] gap-[4px] text-[#777] whitespace-nowrap">
              <Ico n="tomatoTab" s={14} />
              <span>VA View</span>
            </div>
            <div className="ml-[3px] h-[22px] flex items-center pl-[2px] gap-[4px] border-l border-[#c6c6c6] text-[#777] whitespace-nowrap">
              <Ico n="clsv" s={15} />
              <span>类视图</span>
            </div>
          </div>
        </div>
      </div>

      {/* Status bar */}
      <div className="h-[22px] shrink-0 bg-[#efefef] border-t border-[#d8d8d8] flex items-center pl-[9px] text-[12px] text-[#111]">
        <span className="w-[988px] shrink-0">就绪</span>
        <span className="w-[92px] shrink-0">行 33</span>
        <span className="w-[100px] shrink-0">列 1</span>
        <span className="w-[146px] shrink-0">Ch 1</span>
        <span>Ins</span>
      </div>

      {/* Taskbar */}
      <div className="h-[8px] shrink-0 flex bg-[#1f2d35] overflow-hidden text-white text-[11px] leading-[14px]">
        <div className="w-[48px] shrink-0" />
        <div className="w-[344px] shrink-0 bg-[#f0f0f0] border-t border-[#bbb]" />
        <div className="w-[99px] shrink-0" />
        <div className="w-[48px] shrink-0 bg-[#4f5c62]" />
        <div className="w-[147px] shrink-0" />
        <div className="w-[49px] shrink-0 bg-[#a8672f]" />
        <div className="w-[527px] shrink-0" />
        <span className="mt-[4px]">15:09</span>
      </div>

      {/* Floating capture badge */}
      <div className="absolute left-[608px] top-0 w-[62px] h-[62px] rounded-b-[8px] bg-[#4d4d58]/95 flex items-center justify-center">
        <FilePlus size={32} strokeWidth={1.7} className="text-white" />
      </div>
    </div>
  )
}
